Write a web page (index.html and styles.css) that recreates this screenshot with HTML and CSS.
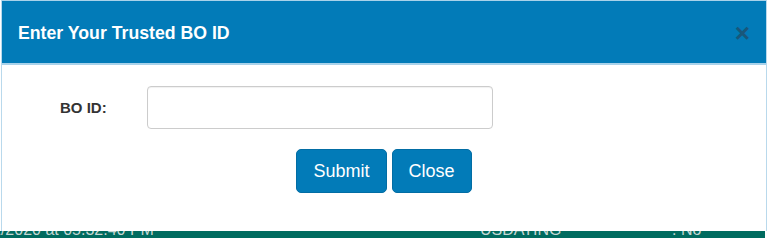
FILE: index.html
```html
<!DOCTYPE html>
<html>
<head>
<meta charset="utf-8">
<link rel="stylesheet" href="styles.css">
</head>
<body>
<div class="modal">
  <div class="modal-header">
    <h4 class="title">Enter Your Trusted BO ID</h4>
    <span class="close">&times;</span>
  </div>
  <div class="modal-body">
    <div class="row">
      <label class="label">BO ID:</label>
      <input class="input" type="text">
    </div>
    <div class="actions">
      <button class="btn">Submit</button>
      <button class="btn">Close</button>
    </div>
  </div>
</div>
<div class="bar">
  <div class="bar-inner">
    <span class="cell c1">1/2020 at 05:32:40 PM</span>
    <span class="cell c2">USDATING</span>
    <span class="cell c3">: No</span>
  </div>
</div>
</body>
</html>
```
FILE: styles.css
```css
html, body {
  margin: 0;
  padding: 0;
  background: #ffffff;
  font-family: "Liberation Sans", Arial, sans-serif;
}
.modal {
  width: 764px;
  margin-left: 1px;
  border-left: 1px solid #b9d9ec;
  border-right: 1px solid #b9d9ec;
  background: #fff;
}
.modal-header {
  height: 62px;
  background: #027bb8;
  border-top: 1px solid #a9d2ea;
  border-bottom: 2px solid #a9d2ea;
  display: flex;
  align-items: center;
  justify-content: space-between;
  padding: 0 16px 0 16px;
}
.title {
  margin: 0;
  color: #ffffff;
  font-size: 17.7px;
  font-weight: bold;
  padding-top: 2px;
}
.close {
  color: #1f4f6c;
  font-size: 26px;
  font-weight: bold;
  line-height: 1;
  opacity: 0.8;
  padding-top: 2px;
}
.modal-body {
  padding: 21px 0 38px 0;
}
.row {
  display: flex;
  align-items: center;
  padding-left: 58px;
}
.label {
  font-size: 15px;
  font-weight: bold;
  color: #333333;
  width: 87px;
}
.input {
  box-sizing: border-box;
  width: 346px;
  height: 43px;
  border: 1px solid #cccccc;
  border-radius: 4px;
  margin: 0;
  padding: 0 10px;
  box-shadow: inset 0 1px 1px rgba(0,0,0,0.06);
}
.actions {
  display: flex;
  justify-content: center;
  gap: 5px;
  margin-top: 20px;
}
.btn {
  height: 44px;
  padding: 0 16px;
  background: #027bb8;
  color: #ffffff;
  border: 1px solid #026da4;
  border-radius: 5px;
  font-family: "Liberation Sans", Arial, sans-serif;
  font-size: 18px;
  margin: 0;
}
.bar {
  width: 765px;
  height: 7px;
  background: #006b5f;
  overflow: hidden;
  border-bottom: 1px solid #9fc9c2;
}
.bar-inner {
  display: flex;
  margin-top: -9px;
  height: 16px;
  color: #c6d8d4;
  font-size: 16px;
  line-height: 16px;
  white-space: nowrap;
}
.c1 { width: 488px; margin-left: -8px; flex: none; }
.c2 { width: 192px; flex: none; }
.c3 { flex: none; }
```
